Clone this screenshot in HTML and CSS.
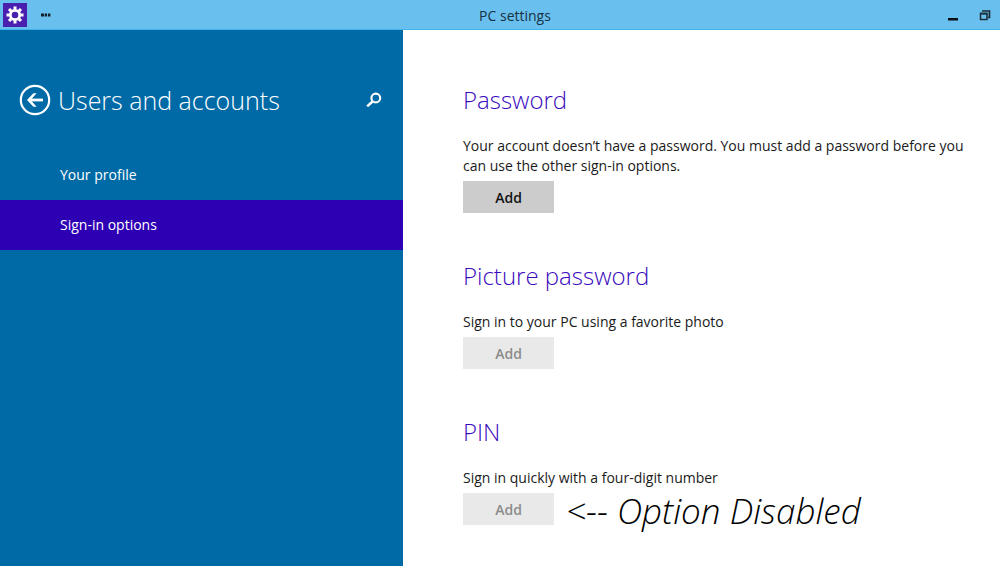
FILE: index.html
```html
<!DOCTYPE html>
<html lang="en">

<head>
  <meta charset="UTF-8">
  <title>PC settings</title>
  <link rel="stylesheet" href="styles.css">
</head>

<body>

  <header class="titlebar">
    <div class="titlebar__left">
      <span class="titlebar__logo">
        <svg width="18" height="18" viewBox="0 0 18 18">
          <circle cx="9" cy="9" r="4.7" fill="none" stroke="#fff" stroke-width="2.8" />
          <g stroke="#fff" stroke-width="3">
            <path d="M9 0.5v3M9 14.5v3M0.5 9h3M14.5 9h3M3 3l2.1 2.1M12.9 12.9L15 15M15 3l-2.1 2.1M5.1 12.9L3 15" />
          </g>
        </svg>
      </span>
      <button class="titlebar__btn" aria-label="More">
        <svg width="10" height="4" viewBox="0 0 10 4" fill="#12202b">
          <path d="M0 0.5h3v3h-3zM3.7 0.5h2.4v3h-2.4zM7 0.5h2.4v3h-2.4z" />
        </svg>
      </button>
    </div>
    <h1 class="titlebar__title">PC settings</h1>
    <div class="titlebar__controls">
      <button class="titlebar__btn" aria-label="Minimize">
        <svg width="12" height="12" viewBox="0 0 12 12"><path d="M1 9h10v2.5H1z" fill="#0a0f14" /></svg>
      </button>
      <button class="titlebar__btn" aria-label="Restore">
        <svg width="12" height="12" viewBox="0 0 12 12" fill="none" stroke="#1c2c38">
          <path d="M1.5 4.5h6.5v6h-6.5z" stroke-width="1.5" />
          <path d="M1 4.7h7.5M3 2h7.5v6.5h-2" stroke-width="1.7" />
        </svg>
      </button>
    </div>
  </header>

  <div class="page">
    <aside class="sidebar">
      <div class="sidebar__head">
        <button class="sidebar__back" aria-label="Back">
          <svg width="32" height="32" viewBox="0 0 32 32" fill="none" stroke="#fff">
            <circle cx="16" cy="16" r="14.2" stroke-width="2.2" />
            <path d="M12 16h12" stroke-width="2.8" />
            <path d="M17.6 9.2h-3.2L8 16l6.4 6.8h3.2L11.6 16z" fill="#fff" stroke="none" />
          </svg>
        </button>
        <h2 class="sidebar__title">Users and accounts</h2>
        <button class="sidebar__search" aria-label="Search">
          <svg width="16" height="16" viewBox="0 0 16 16" fill="none" stroke="#fff">
            <circle cx="9.8" cy="6" r="4.4" stroke-width="2.1" />
            <path d="M6.8 9.3L1.2 14.4" stroke-width="2.6" />
          </svg>
        </button>
      </div>
      <nav class="menu">
        <a href="#profile" class="menu__link">Your profile</a>
        <a href="#sign-in" class="menu__link menu__link_active">Sign-in options</a>
      </nav>
    </aside>

    <main class="content">
      <section class="option">
        <h2 class="option__title">Password</h2>
        <p class="option__text">Your account doesn’t have a password. You must add a password before you can use the other sign-in options.</p>
        <div class="option__row">
          <button class="option__btn">Add</button>
        </div>
      </section>
      <section class="option">
        <h2 class="option__title">Picture password</h2>
        <p class="option__text">Sign in to your PC using a favorite photo</p>
        <div class="option__row">
          <button class="option__btn" disabled>Add</button>
        </div>
      </section>
      <section class="option">
        <h2 class="option__title">PIN</h2>
        <p class="option__text">Sign in quickly with a four-digit number</p>
        <div class="option__row">
          <button class="option__btn" disabled>Add</button>
          <span class="option__note">&lt;-- Option Disabled</span>
        </div>
      </section>
    </main>
  </div>

</body>

</html>
```
FILE: styles.css
```css
body {
  margin: 0;
  min-height: 100vh;
  display: flex;
  flex-direction: column;
  font-family: "Open Sans", "Noto Sans", sans-serif;
  font-size: 14px;
  line-height: 20px;
  color: #1a1a1a;
  background-color: #fff;
}

h1,
h2,
p {
  margin: 0;
  font-weight: normal;
}

button {
  border: none;
  padding: 0;
  background: none;
  font-family: inherit;
  cursor: pointer;
}

svg {
  display: block;
}

.titlebar {
  height: 30px;
  box-sizing: border-box;
  padding: 0 9px 0 3px;
  display: grid;
  grid-template-columns: 1fr auto 1fr;
  align-items: center;
  background-color: #69c0ef;
  border-bottom: 1px solid #45b4ee;
}

.titlebar__left {
  display: flex;
  align-items: center;
  gap: 14px;
}

.titlebar__logo {
  width: 24px;
  height: 24px;
  display: flex;
  align-items: center;
  justify-content: center;
  background-color: #4a1fb0;
}

.titlebar__title {
  padding: 2px 0 0 36px;
  font-size: 14px;
  color: #17303f;
}

.titlebar__controls {
  display: flex;
  justify-content: flex-end;
  gap: 20px;
}

.page {
  flex: 1;
  display: flex;
}

.sidebar {
  width: 40.3%;
  flex-shrink: 0;
  box-sizing: border-box;
  padding-top: 50px;
  background-color: #006aa6;
  color: #fff;
}

.sidebar__head {
  display: flex;
  align-items: center;
  height: 40px;
  padding: 0 21px 0 19px;
}

.sidebar__title {
  flex: 1;
  margin-left: 7px;
  font-size: 25px;
  font-weight: 300;
  line-height: 40px;
}

.menu {
  margin-top: 30px;
}

.menu__link {
  display: block;
  padding-left: 60px;
  line-height: 50px;
  color: #fff;
  text-decoration: none;
}

.menu__link_active {
  background-color: #2d00b3;
}

.content {
  flex: 1;
  padding: 50px 20px 0 60px;
}

.option {
  margin-bottom: 43px;
}

.option__title {
  margin-bottom: 16px;
  font-size: 24px;
  font-weight: 300;
  line-height: 40px;
  color: #3a0bbd;
}

.option__text {
  max-width: 510px;
}

.option__row {
  display: flex;
  align-items: center;
  gap: 12px;
  height: 32px;
  margin-top: 5px;
}

.option__btn {
  width: 91px;
  height: 32px;
  font-size: 14px;
  font-weight: 600;
  color: #111;
  background-color: #ccc;
}

.option__btn:disabled {
  color: #8c8c8c;
  background-color: #e9e9e9;
  cursor: default;
}

.option__note {
  padding-top: 4px;
  font-size: 35px;
  font-weight: 300;
  font-style: italic;
  line-height: 32px;
  color: #000;
}
```
